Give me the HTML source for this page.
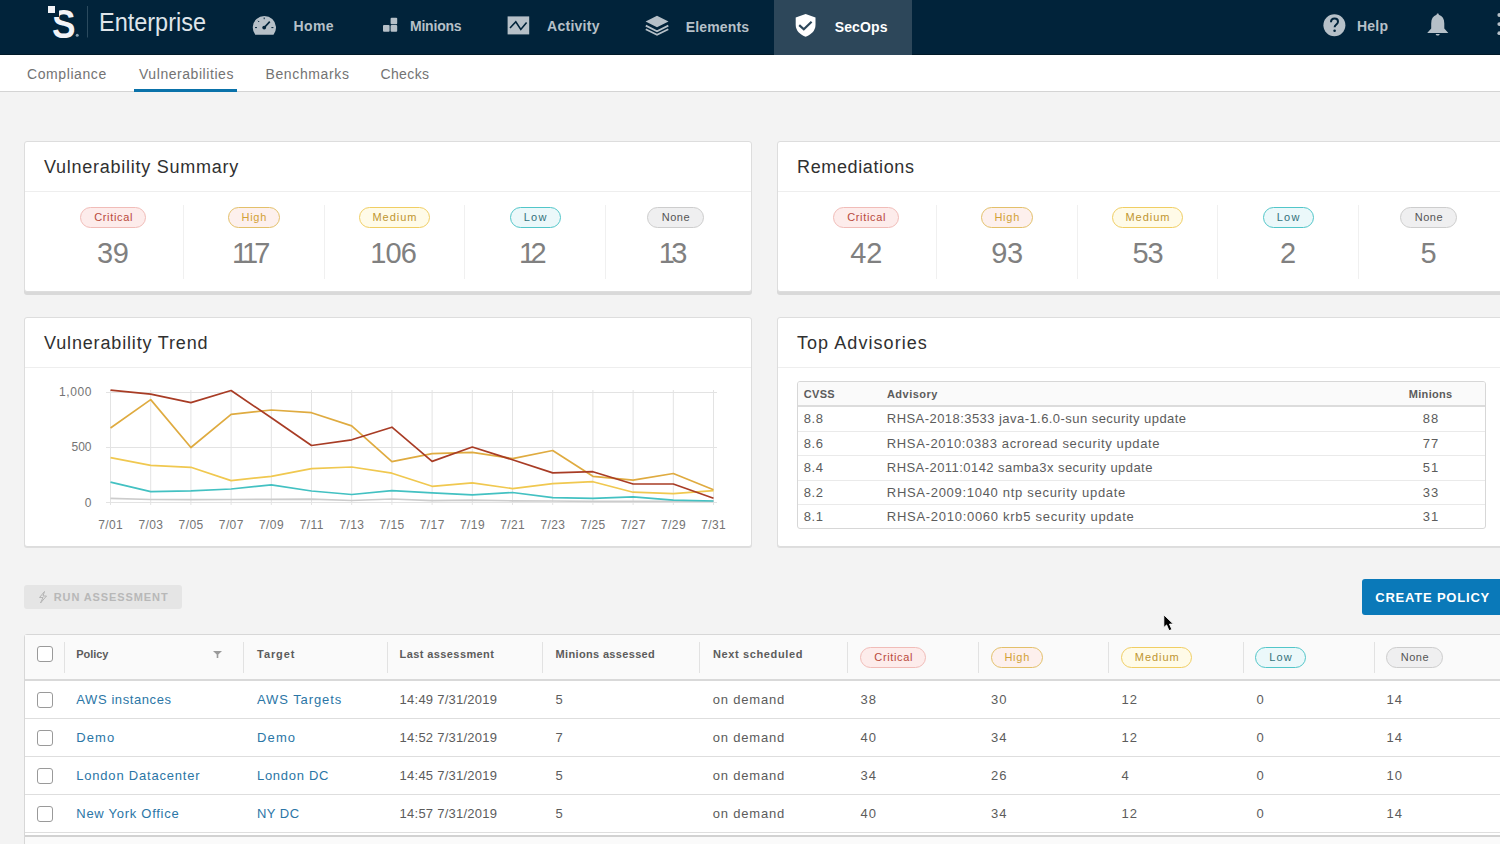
<!DOCTYPE html>
<html><head><meta charset="utf-8"><style>
*{box-sizing:border-box;margin:0;padding:0}
html,body{width:1500px;height:844px;overflow:hidden}
body{background:#f3f3f3;font-family:"Liberation Sans",sans-serif;position:relative}
.a{position:absolute}
.t{white-space:nowrap}
</style></head><body>
<div class="a" style="left:0px;top:0px;width:1500px;height:55px;background:#01233a;"></div>
<div class="a" style="left:0px;top:54px;width:1500px;height:1px;background:#001a29;"></div>
<div class="a" style="left:774px;top:0px;width:138px;height:55px;background:#2d475a;"></div>
<svg class="a" style="left:0;top:0" width="1500" height="55" viewBox="0 0 1500 55">
<circle cx="77.2" cy="35.2" r="1.5" fill="#8aa0b0"/>
<rect x="87" y="6" width="1" height="31.5" fill="#2b4a5e"/>
</svg>
<div class="a" style="left:51.6px;top:3.6px;font-weight:700;font-size:40px;line-height:40px;color:#f2f3f7;transform:scaleX(0.88);transform-origin:left top">S</div>
<div class="a" style="left:49px;top:7px;width:9.5px;height:9.8px;background:#01233a"></div>
<div class="a" style="left:48.3px;top:6px;width:7.1px;height:7.3px;background:#f2f3f7"></div>
<div class="a t" style="left:99.4px;top:9.30px;font-size:26px;line-height:26px;color:#dfe5ea;font-weight:400;letter-spacing:0.000px;transform:scaleX(0.9030);transform-origin:left center;"><span id="t0">Enterprise</span></div>
<div class="a t" style="left:293.6px;top:19.10px;font-size:14px;line-height:14px;color:#b6c0c8;font-weight:700;letter-spacing:0.365px;"><span id="t1">Home</span></div>
<div class="a t" style="left:410px;top:19.20px;font-size:14px;line-height:14px;color:#b6c0c8;font-weight:700;letter-spacing:-0.215px;"><span id="t2">Minions</span></div>
<div class="a t" style="left:547px;top:19.30px;font-size:14px;line-height:14px;color:#b6c0c8;font-weight:700;letter-spacing:0.275px;"><span id="t3">Activity</span></div>
<div class="a t" style="left:685.8px;top:19.50px;font-size:14px;line-height:14px;color:#b6c0c8;font-weight:700;letter-spacing:0.136px;"><span id="t4">Elements</span></div>
<div class="a t" style="left:834.7px;top:19.50px;font-size:14px;line-height:14px;color:#ffffff;font-weight:700;letter-spacing:0.132px;"><span id="t5">SecOps</span></div>
<div class="a t" style="left:1357px;top:19.40px;font-size:14px;line-height:14px;color:#b6c0c8;font-weight:700;letter-spacing:0.219px;"><span id="t6">Help</span></div>
<svg class="a" style="left:0;top:0" width="1500" height="55" viewBox="0 0 1500 55">
<!-- gauge -->
<path d="M255.3,34.8 A11.6,11.6 0 1 1 273.5,34.8 Z" fill="#b6c0c8"/>
<line x1="264.2" y1="27.6" x2="269.8" y2="21.6" stroke="#01233a" stroke-width="1.6"/>
<circle cx="264.2" cy="27.6" r="1.9" fill="#01233a"/>
<line x1="255" y1="27.6" x2="257" y2="27.6" stroke="#01233a" stroke-width="1"/>
<line x1="258" y1="20.8" x2="259.2" y2="22" stroke="#01233a" stroke-width="1"/>
<line x1="264.2" y1="17.5" x2="264.2" y2="19.2" stroke="#01233a" stroke-width="1"/>
<line x1="271.4" y1="27.6" x2="273.4" y2="27.6" stroke="#01233a" stroke-width="1"/>
<!-- minions -->
<rect x="383" y="25" width="6.6" height="6.8" rx="1" fill="#b6c0c8"/>
<rect x="390.6" y="25" width="6.6" height="6.8" rx="1" fill="#b6c0c8"/>
<rect x="390.6" y="17.8" width="6.6" height="6.4" rx="1" fill="#b6c0c8"/>
<!-- activity -->
<rect x="507.6" y="16.4" width="21.6" height="18" fill="#b6c0c8"/>
<polyline points="510,28 515.8,21.8 520.8,29.4 526.6,22.4" fill="none" stroke="#01233a" stroke-width="1.6"/>
<!-- elements -->
<polygon points="657,15.8 668.5,21.5 657,27.2 645.6,21.5" fill="#b6c0c8"/>
<polyline points="645.8,25.6 657,31.2 668.3,25.6" fill="none" stroke="#b6c0c8" stroke-width="1.8"/>
<polyline points="645.8,29.2 657,34.8 668.3,29.2" fill="none" stroke="#b6c0c8" stroke-width="1.8"/>
<!-- shield -->
<path d="M805.6,13.9 L815.5,17.5 L815.5,25 C815.5,31 810.5,35 805.6,36.8 C800.7,35 795.7,31 795.7,25 L795.7,17.5 Z" fill="#ffffff"/>
<polyline points="799.2,25.1 803.8,29.3 811.6,21.8" fill="none" stroke="#2d475a" stroke-width="2.2"/>
<!-- help -->
<circle cx="1334.4" cy="25.3" r="11" fill="#b6c0c8"/>
<path d="M1331,22.2 C1331,19.6 1333,18.6 1334.6,18.6 C1336.6,18.6 1338,20 1338,21.8 C1338,24.5 1334.6,24.5 1334.6,27.3" fill="none" stroke="#01233a" stroke-width="2"/>
<circle cx="1334.6" cy="30.8" r="1.3" fill="#01233a"/>
<!-- bell -->
<path d="M1437.7,13.5 C1438.5,13.5 1438.8,14 1438.8,14.8 C1442.5,16 1444.3,19 1444.3,23.5 L1444.3,28.5 L1448.3,33 L1427.2,33 L1431.2,28.5 L1431.2,23.5 C1431.2,19 1433,16 1436.6,14.8 C1436.6,14 1437,13.5 1437.7,13.5 Z" fill="#b6c0c8"/>
<path d="M1435.7,34 L1439.7,34 C1439.5,35.2 1438.7,35.6 1437.7,35.6 C1436.7,35.6 1435.9,35.2 1435.7,34 Z" fill="#b6c0c8"/>
<!-- dots -->
<circle cx="1499.3" cy="15" r="1.9" fill="#b6c0c8"/>
<circle cx="1499.3" cy="24.1" r="1.9" fill="#b6c0c8"/>
<circle cx="1499.3" cy="33.2" r="1.9" fill="#b6c0c8"/>
</svg>
<div class="a" style="left:0px;top:55px;width:1500px;height:36px;background:#ffffff;"></div>
<div class="a" style="left:0px;top:91px;width:1500px;height:1px;background:#d4d4d4;"></div>
<div class="a t" style="left:27px;top:66.70px;font-size:14px;line-height:14px;color:#737373;font-weight:400;letter-spacing:0.585px;"><span id="t7">Compliance</span></div>
<div class="a t" style="left:139px;top:66.70px;font-size:14px;line-height:14px;color:#737373;font-weight:400;letter-spacing:0.554px;"><span id="t8">Vulnerabilities</span></div>
<div class="a t" style="left:265.5px;top:66.70px;font-size:14px;line-height:14px;color:#737373;font-weight:400;letter-spacing:0.621px;"><span id="t9">Benchmarks</span></div>
<div class="a t" style="left:380.5px;top:66.70px;font-size:14px;line-height:14px;color:#737373;font-weight:400;letter-spacing:0.362px;"><span id="t10">Checks</span></div>
<div class="a" style="left:134px;top:88.5px;width:103px;height:3px;background:#0a72aa;"></div>
<div class="a" style="left:24px;top:141px;width:728px;height:151px;background:#fff;border:1px solid #dddddd;border-radius:3px;box-shadow:0 3px 0 #d9d9d9;"></div>
<div class="a" style="left:25px;top:191px;width:726px;height:1px;background:#eeeeee;"></div>
<div class="a t" style="left:44px;top:157.70px;font-size:18px;line-height:18px;color:#303030;font-weight:400;letter-spacing:0.745px;"><span id="t11">Vulnerability Summary</span></div>
<div class="a" style="left:777px;top:141px;width:800px;height:151px;background:#fff;border:1px solid #dddddd;border-radius:3px;box-shadow:0 3px 0 #d9d9d9;"></div>
<div class="a" style="left:778px;top:191px;width:798px;height:1px;background:#eeeeee;"></div>
<div class="a t" style="left:797px;top:157.70px;font-size:18px;line-height:18px;color:#303030;font-weight:400;letter-spacing:0.631px;"><span id="t12">Remediations</span></div>
<div class="a" style="left:80.3px;top:207px;width:66px;height:21px;border:1px solid #f1bcb8;background:#fdeceb;border-radius:11px"></div>
<div class="a t" style="left:-186.7px;width:600px;text-align:center;padding-left:0.654px;top:211.95px;font-size:11px;line-height:11px;color:#b94a3d;font-weight:400;letter-spacing:0.654px;"><span id="t13">Critical</span></div>
<div class="a t" style="left:-187.2px;width:600px;text-align:center;padding-left:-0.266px;top:238.95px;font-size:29px;line-height:29px;color:#808080;font-weight:400;letter-spacing:-0.266px;"><span id="t14">39</span></div>
<div class="a" style="left:227.6px;top:207px;width:52.5px;height:21px;border:1px solid #e3c06a;background:#fdf0ed;border-radius:11px"></div>
<div class="a t" style="left:-46.10000000000002px;width:600px;text-align:center;padding-left:0.792px;top:211.95px;font-size:11px;line-height:11px;color:#d2a136;font-weight:400;letter-spacing:0.792px;"><span id="t15">High</span></div>
<div class="a t" style="left:-50.80000000000001px;width:600px;text-align:center;padding-left:-3.917px;top:238.95px;font-size:29px;line-height:29px;color:#808080;font-weight:400;letter-spacing:-3.917px;"><span id="t16">117</span></div>
<div class="a" style="left:183.1px;top:205px;width:1px;height:74px;background:#f0f0f0;"></div>
<div class="a" style="left:359.0px;top:207px;width:71px;height:21px;border:1px solid #f0ce63;background:#fffbe8;border-radius:11px"></div>
<div class="a t" style="left:94.5px;width:600px;text-align:center;padding-left:0.975px;top:211.95px;font-size:11px;line-height:11px;color:#c09630;font-weight:400;letter-spacing:0.975px;"><span id="t17">Medium</span></div>
<div class="a t" style="left:93.10000000000002px;width:600px;text-align:center;padding-left:-0.945px;top:238.95px;font-size:29px;line-height:29px;color:#808080;font-weight:400;letter-spacing:-0.945px;"><span id="t18">106</span></div>
<div class="a" style="left:323.7px;top:205px;width:1px;height:74px;background:#f0f0f0;"></div>
<div class="a" style="left:509.6px;top:207px;width:51px;height:21px;border:1px solid #52c6c9;background:#ebf8fa;border-radius:11px"></div>
<div class="a t" style="left:235.0999999999999px;width:600px;text-align:center;padding-left:1.156px;top:211.95px;font-size:11px;line-height:11px;color:#33727a;font-weight:400;letter-spacing:1.156px;"><span id="t19">Low</span></div>
<div class="a t" style="left:230.5999999999999px;width:600px;text-align:center;padding-left:-4.466px;top:238.95px;font-size:29px;line-height:29px;color:#808080;font-weight:400;letter-spacing:-4.466px;"><span id="t20">12</span></div>
<div class="a" style="left:464.29999999999995px;top:205px;width:1px;height:74px;background:#f0f0f0;"></div>
<div class="a" style="left:647.2px;top:207px;width:57px;height:21px;border:1px solid #cdcdcd;background:#efeff0;border-radius:11px"></div>
<div class="a t" style="left:375.69999999999993px;width:600px;text-align:center;padding-left:0.568px;top:211.95px;font-size:11px;line-height:11px;color:#555555;font-weight:400;letter-spacing:0.568px;"><span id="t21">None</span></div>
<div class="a t" style="left:371.19999999999993px;width:600px;text-align:center;padding-left:-3.666px;top:238.95px;font-size:29px;line-height:29px;color:#808080;font-weight:400;letter-spacing:-3.666px;"><span id="t22">13</span></div>
<div class="a" style="left:604.9px;top:205px;width:1px;height:74px;background:#f0f0f0;"></div>
<div class="a" style="left:833.3px;top:207px;width:66px;height:21px;border:1px solid #f1bcb8;background:#fdeceb;border-radius:11px"></div>
<div class="a t" style="left:566.3px;width:600px;text-align:center;padding-left:0.654px;top:211.95px;font-size:11px;line-height:11px;color:#b94a3d;font-weight:400;letter-spacing:0.654px;"><span id="t23">Critical</span></div>
<div class="a t" style="left:566.3px;width:600px;text-align:center;padding-left:-0.066px;top:238.95px;font-size:29px;line-height:29px;color:#808080;font-weight:400;letter-spacing:-0.066px;"><span id="t24">42</span></div>
<div class="a" style="left:980.6px;top:207px;width:52.5px;height:21px;border:1px solid #e3c06a;background:#fdf0ed;border-radius:11px"></div>
<div class="a t" style="left:706.9px;width:600px;text-align:center;padding-left:0.792px;top:211.95px;font-size:11px;line-height:11px;color:#d2a136;font-weight:400;letter-spacing:0.792px;"><span id="t25">High</span></div>
<div class="a t" style="left:706.9px;width:600px;text-align:center;padding-left:-0.466px;top:238.95px;font-size:29px;line-height:29px;color:#808080;font-weight:400;letter-spacing:-0.466px;"><span id="t26">93</span></div>
<div class="a" style="left:936.1px;top:205px;width:1px;height:74px;background:#f0f0f0;"></div>
<div class="a" style="left:1112.0px;top:207px;width:71px;height:21px;border:1px solid #f0ce63;background:#fffbe8;border-radius:11px"></div>
<div class="a t" style="left:847.5px;width:600px;text-align:center;padding-left:0.975px;top:211.95px;font-size:11px;line-height:11px;color:#c09630;font-weight:400;letter-spacing:0.975px;"><span id="t27">Medium</span></div>
<div class="a t" style="left:847.5px;width:600px;text-align:center;padding-left:-1.066px;top:238.95px;font-size:29px;line-height:29px;color:#808080;font-weight:400;letter-spacing:-1.066px;"><span id="t28">53</span></div>
<div class="a" style="left:1076.7px;top:205px;width:1px;height:74px;background:#f0f0f0;"></div>
<div class="a" style="left:1262.6px;top:207px;width:51px;height:21px;border:1px solid #52c6c9;background:#ebf8fa;border-radius:11px"></div>
<div class="a t" style="left:988.0999999999999px;width:600px;text-align:center;padding-left:1.156px;top:211.95px;font-size:11px;line-height:11px;color:#33727a;font-weight:400;letter-spacing:1.156px;"><span id="t29">Low</span></div>
<div class="a t" style="left:988.0999999999999px;width:600px;text-align:center;padding-left:0.000px;top:238.95px;font-size:29px;line-height:29px;color:#808080;font-weight:400;letter-spacing:0.000px;"><span id="t30">2</span></div>
<div class="a" style="left:1217.3px;top:205px;width:1px;height:74px;background:#f0f0f0;"></div>
<div class="a" style="left:1400.2px;top:207px;width:57px;height:21px;border:1px solid #cdcdcd;background:#efeff0;border-radius:11px"></div>
<div class="a t" style="left:1128.6999999999998px;width:600px;text-align:center;padding-left:0.568px;top:211.95px;font-size:11px;line-height:11px;color:#555555;font-weight:400;letter-spacing:0.568px;"><span id="t31">None</span></div>
<div class="a t" style="left:1128.6999999999998px;width:600px;text-align:center;padding-left:0.000px;top:238.95px;font-size:29px;line-height:29px;color:#808080;font-weight:400;letter-spacing:0.000px;"><span id="t32">5</span></div>
<div class="a" style="left:1357.9px;top:205px;width:1px;height:74px;background:#f0f0f0;"></div>
<div class="a" style="left:24px;top:317px;width:728px;height:230px;background:#fff;border:1px solid #dddddd;border-radius:3px;box-shadow:0 1px 0 #dedede;"></div>
<div class="a" style="left:25px;top:367px;width:726px;height:1px;background:#eeeeee;"></div>
<div class="a t" style="left:44px;top:333.70px;font-size:18px;line-height:18px;color:#303030;font-weight:400;letter-spacing:0.843px;"><span id="t33">Vulnerability Trend</span></div>
<div class="a" style="left:777px;top:317px;width:800px;height:230px;background:#fff;border:1px solid #dddddd;border-radius:3px;box-shadow:0 1px 0 #dedede;"></div>
<div class="a" style="left:778px;top:367px;width:798px;height:1px;background:#eeeeee;"></div>
<div class="a t" style="left:797px;top:333.70px;font-size:18px;line-height:18px;color:#303030;font-weight:400;letter-spacing:1.057px;"><span id="t34">Top Advisories</span></div>
<svg class="a" style="left:0;top:0" width="760" height="560" viewBox="0 0 760 560"><line x1="106" y1="392.5" x2="717" y2="392.5" stroke="#e3e3e3" stroke-width="1"/><line x1="106" y1="447.5" x2="717" y2="447.5" stroke="#e3e3e3" stroke-width="1"/><line x1="106" y1="502.5" x2="717" y2="502.5" stroke="#e3e3e3" stroke-width="1"/><line x1="110.5" y1="390" x2="110.5" y2="505" stroke="#e3e3e3" stroke-width="1"/><line x1="150.7" y1="390" x2="150.7" y2="505" stroke="#e3e3e3" stroke-width="1"/><line x1="190.9" y1="390" x2="190.9" y2="505" stroke="#e3e3e3" stroke-width="1"/><line x1="231.1" y1="390" x2="231.1" y2="505" stroke="#e3e3e3" stroke-width="1"/><line x1="271.3" y1="390" x2="271.3" y2="505" stroke="#e3e3e3" stroke-width="1"/><line x1="311.5" y1="390" x2="311.5" y2="505" stroke="#e3e3e3" stroke-width="1"/><line x1="351.7" y1="390" x2="351.7" y2="505" stroke="#e3e3e3" stroke-width="1"/><line x1="391.9" y1="390" x2="391.9" y2="505" stroke="#e3e3e3" stroke-width="1"/><line x1="432.1" y1="390" x2="432.1" y2="505" stroke="#e3e3e3" stroke-width="1"/><line x1="472.3" y1="390" x2="472.3" y2="505" stroke="#e3e3e3" stroke-width="1"/><line x1="512.5" y1="390" x2="512.5" y2="505" stroke="#e3e3e3" stroke-width="1"/><line x1="552.7" y1="390" x2="552.7" y2="505" stroke="#e3e3e3" stroke-width="1"/><line x1="592.9" y1="390" x2="592.9" y2="505" stroke="#e3e3e3" stroke-width="1"/><line x1="633.1" y1="390" x2="633.1" y2="505" stroke="#e3e3e3" stroke-width="1"/><line x1="673.3" y1="390" x2="673.3" y2="505" stroke="#e3e3e3" stroke-width="1"/><line x1="713.5" y1="390" x2="713.5" y2="505" stroke="#e3e3e3" stroke-width="1"/><polyline points="110.5,498.3 150.7,499.5 190.9,499.6 231.1,499.5 271.3,499.4 311.5,499.2 351.7,500.5 391.9,499.0 432.1,500.6 472.3,500.2 512.5,500.8 552.7,501.0 592.9,501.4 633.1,501.4 673.3,501.4 713.5,501.4" fill="none" stroke="#cccccc" stroke-width="1.7" stroke-linejoin="round"/><polyline points="110.5,482.2 150.7,491.7 190.9,490.8 231.1,489.0 271.3,484.8 311.5,491.0 351.7,494.5 391.9,490.6 432.1,492.8 472.3,494.8 512.5,492.5 552.7,497.6 592.9,498.3 633.1,496.8 673.3,500.2 713.5,501.0" fill="none" stroke="#43c1c2" stroke-width="1.7" stroke-linejoin="round"/><polyline points="110.5,457.6 150.7,465.3 190.9,467.3 231.1,480.6 271.3,476.3 311.5,468.6 351.7,467.0 391.9,473.2 432.1,486.3 472.3,482.9 512.5,488.6 552.7,483.7 592.9,481.7 633.1,492.2 673.3,493.7 713.5,490.6" fill="none" stroke="#f0c850" stroke-width="1.7" stroke-linejoin="round"/><polyline points="110.5,428.0 150.7,399.6 190.9,447.5 231.1,414.3 271.3,410.0 311.5,412.7 351.7,425.9 391.9,461.7 432.1,453.7 472.3,452.4 512.5,458.6 552.7,450.5 592.9,476.3 633.1,480.2 673.3,473.5 713.5,489.7" fill="none" stroke="#dfab40" stroke-width="1.7" stroke-linejoin="round"/><polyline points="110.5,390.1 150.7,394.2 190.9,402.6 231.1,390.5 271.3,417.8 311.5,445.5 351.7,439.8 391.9,427.2 432.1,461.4 472.3,447.0 512.5,459.8 552.7,472.9 592.9,471.7 633.1,484.0 673.3,484.0 713.5,498.3" fill="none" stroke="#a83c25" stroke-width="1.7" stroke-linejoin="round"/></svg>
<div class="a t" style="right:1408.5px;text-align:right;margin-right:-0.592px;top:386.30px;font-size:12px;line-height:12px;color:#747474;font-weight:400;letter-spacing:0.592px;"><span id="t35">1,000</span></div>
<div class="a t" style="right:1408.5px;text-align:right;margin-right:0.000px;top:441.30px;font-size:12px;line-height:12px;color:#747474;font-weight:400;letter-spacing:0.000px;"><span id="t36">500</span></div>
<div class="a t" style="right:1408.5px;text-align:right;margin-right:0.000px;top:496.80px;font-size:12px;line-height:12px;color:#747474;font-weight:400;letter-spacing:0.000px;"><span id="t37">0</span></div>
<div class="a t" style="left:-189.5px;width:600px;text-align:center;padding-left:0.400px;top:518.60px;font-size:12px;line-height:12px;color:#747474;font-weight:400;letter-spacing:0.400px;"><span id="t38">7/01</span></div>
<div class="a t" style="left:-149.3px;width:600px;text-align:center;padding-left:0.400px;top:518.60px;font-size:12px;line-height:12px;color:#747474;font-weight:400;letter-spacing:0.400px;"><span id="t39">7/03</span></div>
<div class="a t" style="left:-109.1px;width:600px;text-align:center;padding-left:0.400px;top:518.60px;font-size:12px;line-height:12px;color:#747474;font-weight:400;letter-spacing:0.400px;"><span id="t40">7/05</span></div>
<div class="a t" style="left:-68.89999999999998px;width:600px;text-align:center;padding-left:0.400px;top:518.60px;font-size:12px;line-height:12px;color:#747474;font-weight:400;letter-spacing:0.400px;"><span id="t41">7/07</span></div>
<div class="a t" style="left:-28.69999999999999px;width:600px;text-align:center;padding-left:0.400px;top:518.60px;font-size:12px;line-height:12px;color:#747474;font-weight:400;letter-spacing:0.400px;"><span id="t42">7/09</span></div>
<div class="a t" style="left:11.5px;width:600px;text-align:center;padding-left:0.400px;top:518.60px;font-size:12px;line-height:12px;color:#747474;font-weight:400;letter-spacing:0.400px;"><span id="t43">7/11</span></div>
<div class="a t" style="left:51.700000000000045px;width:600px;text-align:center;padding-left:0.400px;top:518.60px;font-size:12px;line-height:12px;color:#747474;font-weight:400;letter-spacing:0.400px;"><span id="t44">7/13</span></div>
<div class="a t" style="left:91.90000000000003px;width:600px;text-align:center;padding-left:0.400px;top:518.60px;font-size:12px;line-height:12px;color:#747474;font-weight:400;letter-spacing:0.400px;"><span id="t45">7/15</span></div>
<div class="a t" style="left:132.10000000000002px;width:600px;text-align:center;padding-left:0.400px;top:518.60px;font-size:12px;line-height:12px;color:#747474;font-weight:400;letter-spacing:0.400px;"><span id="t46">7/17</span></div>
<div class="a t" style="left:172.3px;width:600px;text-align:center;padding-left:0.400px;top:518.60px;font-size:12px;line-height:12px;color:#747474;font-weight:400;letter-spacing:0.400px;"><span id="t47">7/19</span></div>
<div class="a t" style="left:212.5px;width:600px;text-align:center;padding-left:0.400px;top:518.60px;font-size:12px;line-height:12px;color:#747474;font-weight:400;letter-spacing:0.400px;"><span id="t48">7/21</span></div>
<div class="a t" style="left:252.70000000000005px;width:600px;text-align:center;padding-left:0.400px;top:518.60px;font-size:12px;line-height:12px;color:#747474;font-weight:400;letter-spacing:0.400px;"><span id="t49">7/23</span></div>
<div class="a t" style="left:292.9000000000001px;width:600px;text-align:center;padding-left:0.400px;top:518.60px;font-size:12px;line-height:12px;color:#747474;font-weight:400;letter-spacing:0.400px;"><span id="t50">7/25</span></div>
<div class="a t" style="left:333.1px;width:600px;text-align:center;padding-left:0.400px;top:518.60px;font-size:12px;line-height:12px;color:#747474;font-weight:400;letter-spacing:0.400px;"><span id="t51">7/27</span></div>
<div class="a t" style="left:373.30000000000007px;width:600px;text-align:center;padding-left:0.400px;top:518.60px;font-size:12px;line-height:12px;color:#747474;font-weight:400;letter-spacing:0.400px;"><span id="t52">7/29</span></div>
<div class="a t" style="left:413.5px;width:600px;text-align:center;padding-left:0.400px;top:518.60px;font-size:12px;line-height:12px;color:#747474;font-weight:400;letter-spacing:0.400px;"><span id="t53">7/31</span></div>
<div class="a" style="left:797px;top:381px;width:689px;height:148px;border:1px solid #d7d7d7;border-radius:3px;background:#fff;overflow:hidden"><div style="position:absolute;left:0;top:0;width:100%;height:25px;background:#fafafa;border-bottom:2px solid #dcdcdc"></div></div>
<div class="a t" style="left:803.7px;top:388.95px;font-size:11px;line-height:11px;color:#5c5c5c;font-weight:700;letter-spacing:0.344px;"><span id="t54">CVSS</span></div>
<div class="a t" style="left:886.9px;top:388.95px;font-size:11px;line-height:11px;color:#5c5c5c;font-weight:700;letter-spacing:0.503px;"><span id="t55">Advisory</span></div>
<div class="a t" style="left:1130.5px;width:600px;text-align:center;padding-left:0.323px;top:388.95px;font-size:11px;line-height:11px;color:#5c5c5c;font-weight:700;letter-spacing:0.323px;"><span id="t56">Minions</span></div>
<div class="a t" style="left:803.7px;top:412.05px;font-size:13px;line-height:13px;color:#5c5c5c;font-weight:400;letter-spacing:0.600px;"><span id="t57">8.8</span></div>
<div class="a t" style="left:886.8px;top:412.05px;font-size:13px;line-height:13px;color:#5c5c5c;font-weight:400;letter-spacing:0.446px;"><span id="t58">RHSA-2018:3533 java-1.6.0-sun security update</span></div>
<div class="a t" style="left:1130.5px;width:600px;text-align:center;padding-left:1.000px;top:412.05px;font-size:13px;line-height:13px;color:#5c5c5c;font-weight:400;letter-spacing:1.000px;"><span id="t59">88</span></div>
<div class="a" style="left:798px;top:430.6px;width:687px;height:1px;background:#eaeaea;"></div>
<div class="a t" style="left:803.7px;top:436.60px;font-size:13px;line-height:13px;color:#5c5c5c;font-weight:400;letter-spacing:0.600px;"><span id="t60">8.6</span></div>
<div class="a t" style="left:886.8px;top:436.60px;font-size:13px;line-height:13px;color:#5c5c5c;font-weight:400;letter-spacing:0.634px;"><span id="t61">RHSA-2010:0383 acroread security update</span></div>
<div class="a t" style="left:1130.5px;width:600px;text-align:center;padding-left:1.000px;top:436.60px;font-size:13px;line-height:13px;color:#5c5c5c;font-weight:400;letter-spacing:1.000px;"><span id="t62">77</span></div>
<div class="a" style="left:798px;top:455.2px;width:687px;height:1px;background:#eaeaea;"></div>
<div class="a t" style="left:803.7px;top:461.15px;font-size:13px;line-height:13px;color:#5c5c5c;font-weight:400;letter-spacing:0.600px;"><span id="t63">8.4</span></div>
<div class="a t" style="left:886.8px;top:461.15px;font-size:13px;line-height:13px;color:#5c5c5c;font-weight:400;letter-spacing:0.447px;"><span id="t64">RHSA-2011:0142 samba3x security update</span></div>
<div class="a t" style="left:1130.5px;width:600px;text-align:center;padding-left:1.000px;top:461.15px;font-size:13px;line-height:13px;color:#5c5c5c;font-weight:400;letter-spacing:1.000px;"><span id="t65">51</span></div>
<div class="a" style="left:798px;top:479.8px;width:687px;height:1px;background:#eaeaea;"></div>
<div class="a t" style="left:803.7px;top:485.70px;font-size:13px;line-height:13px;color:#5c5c5c;font-weight:400;letter-spacing:0.600px;"><span id="t66">8.2</span></div>
<div class="a t" style="left:886.8px;top:485.70px;font-size:13px;line-height:13px;color:#5c5c5c;font-weight:400;letter-spacing:0.701px;"><span id="t67">RHSA-2009:1040 ntp security update</span></div>
<div class="a t" style="left:1130.5px;width:600px;text-align:center;padding-left:1.000px;top:485.70px;font-size:13px;line-height:13px;color:#5c5c5c;font-weight:400;letter-spacing:1.000px;"><span id="t68">33</span></div>
<div class="a" style="left:798px;top:504.4px;width:687px;height:1px;background:#eaeaea;"></div>
<div class="a t" style="left:803.7px;top:510.25px;font-size:13px;line-height:13px;color:#5c5c5c;font-weight:400;letter-spacing:0.600px;"><span id="t69">8.1</span></div>
<div class="a t" style="left:886.8px;top:510.25px;font-size:13px;line-height:13px;color:#5c5c5c;font-weight:400;letter-spacing:0.718px;"><span id="t70">RHSA-2010:0060 krb5 security update</span></div>
<div class="a t" style="left:1130.5px;width:600px;text-align:center;padding-left:1.000px;top:510.25px;font-size:13px;line-height:13px;color:#5c5c5c;font-weight:400;letter-spacing:1.000px;"><span id="t71">31</span></div>
<div class="a" style="left:24px;top:585px;width:158px;height:24px;background:#e5e5e5;border-radius:3px"></div>
<svg class="a" style="left:36px;top:590px" width="14" height="15" viewBox="0 0 14 15"><path d="M8.5,1.5 L3.5,7.5 L7,7.5 L4.5,13 L10.5,6 L7,6 Z" fill="none" stroke="#b5b5b5" stroke-width="1"/></svg>
<div class="a t" style="left:53.7px;top:591.85px;font-size:11px;line-height:11px;color:#b8b8b8;font-weight:700;letter-spacing:0.901px;"><span id="t72">RUN ASSESSMENT</span></div>
<div class="a" style="left:1362px;top:579px;width:180px;height:36px;background:#0a79b9;border-radius:3px"></div>
<div class="a t" style="left:1375.2px;top:591.45px;font-size:13px;line-height:13px;color:#ffffff;font-weight:700;letter-spacing:0.800px;"><span id="t73">CREATE POLICY</span></div>
<svg class="a" style="left:1162px;top:613px" width="14" height="20" viewBox="0 0 14 20"><path d="M1.8,1.8 L1.8,14.6 L4.6,11.9 L7,17.6 L9.9,16.6 L7.5,11.1 L11.4,11.1 Z" fill="#000" stroke="#fff" stroke-width="0.9"/></svg>
<div class="a" style="left:24px;top:634px;width:1500px;height:230px;background:#fff;border:1px solid #d7d7d7;border-radius:3px"></div>
<div class="a" style="left:25px;top:635px;width:1475px;height:44px;background:#fafafa;"></div>
<div class="a" style="left:25px;top:679px;width:1475px;height:2px;background:#d9d9d9;"></div>
<div class="a" style="left:64px;top:642px;width:1px;height:31px;background:#e2e2e2;"></div>
<div class="a" style="left:243px;top:642px;width:1px;height:31px;background:#e2e2e2;"></div>
<div class="a" style="left:387px;top:642px;width:1px;height:31px;background:#e2e2e2;"></div>
<div class="a" style="left:542px;top:642px;width:1px;height:31px;background:#e2e2e2;"></div>
<div class="a" style="left:699px;top:642px;width:1px;height:31px;background:#e2e2e2;"></div>
<div class="a" style="left:847px;top:642px;width:1px;height:31px;background:#e2e2e2;"></div>
<div class="a" style="left:978px;top:642px;width:1px;height:31px;background:#e2e2e2;"></div>
<div class="a" style="left:1108px;top:642px;width:1px;height:31px;background:#e2e2e2;"></div>
<div class="a" style="left:1243px;top:642px;width:1px;height:31px;background:#e2e2e2;"></div>
<div class="a" style="left:1374px;top:642px;width:1px;height:31px;background:#e2e2e2;"></div>
<div class="a" style="left:37px;top:645.5px;width:16px;height:16px;border:1px solid #9a9a9a;border-radius:3px;background:#fff"></div>
<div class="a t" style="left:76.3px;top:648.95px;font-size:11px;line-height:11px;color:#5c5c5c;font-weight:700;letter-spacing:-0.081px;"><span id="t74">Policy</span></div>
<svg class="a" style="left:212px;top:650px" width="11" height="9" viewBox="0 0 11 9"><path d="M1,1 L10,1 L6.3,4.5 L6.3,8 L4.7,8 L4.7,4.5 Z" fill="#9a9a9a"/></svg>
<div class="a t" style="left:257.1px;top:648.95px;font-size:11px;line-height:11px;color:#5c5c5c;font-weight:700;letter-spacing:0.897px;"><span id="t75">Target</span></div>
<div class="a t" style="left:399.6px;top:648.95px;font-size:11px;line-height:11px;color:#5c5c5c;font-weight:700;letter-spacing:0.402px;"><span id="t76">Last assessment</span></div>
<div class="a t" style="left:555.6px;top:648.95px;font-size:11px;line-height:11px;color:#5c5c5c;font-weight:700;letter-spacing:0.336px;"><span id="t77">Minions assessed</span></div>
<div class="a t" style="left:713px;top:648.95px;font-size:11px;line-height:11px;color:#5c5c5c;font-weight:700;letter-spacing:0.622px;"><span id="t78">Next scheduled</span></div>
<div class="a" style="left:860.4px;top:647px;width:66px;height:21px;border:1px solid #f1bcb8;background:#fdeceb;border-radius:11px"></div>
<div class="a t" style="left:593.4px;width:600px;text-align:center;padding-left:0.654px;top:651.95px;font-size:11px;line-height:11px;color:#b94a3d;font-weight:400;letter-spacing:0.654px;"><span id="t79">Critical</span></div>
<div class="a" style="left:990.6px;top:647px;width:52.5px;height:21px;border:1px solid #e3c06a;background:#fdf0ed;border-radius:11px"></div>
<div class="a t" style="left:716.9px;width:600px;text-align:center;padding-left:0.792px;top:651.95px;font-size:11px;line-height:11px;color:#d2a136;font-weight:400;letter-spacing:0.792px;"><span id="t80">High</span></div>
<div class="a" style="left:1121.3px;top:647px;width:71px;height:21px;border:1px solid #f0ce63;background:#fffbe8;border-radius:11px"></div>
<div class="a t" style="left:856.8px;width:600px;text-align:center;padding-left:0.975px;top:651.95px;font-size:11px;line-height:11px;color:#c09630;font-weight:400;letter-spacing:0.975px;"><span id="t81">Medium</span></div>
<div class="a" style="left:1255.0px;top:647px;width:51px;height:21px;border:1px solid #52c6c9;background:#ebf8fa;border-radius:11px"></div>
<div class="a t" style="left:980.5px;width:600px;text-align:center;padding-left:1.156px;top:651.95px;font-size:11px;line-height:11px;color:#33727a;font-weight:400;letter-spacing:1.156px;"><span id="t82">Low</span></div>
<div class="a" style="left:1386.2px;top:647px;width:57px;height:21px;border:1px solid #cdcdcd;background:#efeff0;border-radius:11px"></div>
<div class="a t" style="left:1114.7px;width:600px;text-align:center;padding-left:0.568px;top:651.95px;font-size:11px;line-height:11px;color:#555555;font-weight:400;letter-spacing:0.568px;"><span id="t83">None</span></div>
<div class="a" style="left:25px;top:718px;width:1475px;height:1px;background:#dedede;"></div>
<div class="a" style="left:37px;top:692px;width:16px;height:16px;border:1px solid #9a9a9a;border-radius:3px;background:#fff"></div>
<div class="a t" style="left:76.3px;top:692.65px;font-size:13px;line-height:13px;color:#2b76a6;font-weight:400;letter-spacing:0.586px;"><span id="t84">AWS instances</span></div>
<div class="a t" style="left:257px;top:692.65px;font-size:13px;line-height:13px;color:#2b76a6;font-weight:400;letter-spacing:0.916px;"><span id="t85">AWS Targets</span></div>
<div class="a t" style="left:399.6px;top:692.65px;font-size:13px;line-height:13px;color:#5c5c5c;font-weight:400;letter-spacing:0.244px;"><span id="t86">14:49 7/31/2019</span></div>
<div class="a t" style="left:555.6px;top:692.65px;font-size:13px;line-height:13px;color:#5c5c5c;font-weight:400;letter-spacing:1.000px;"><span id="t87">5</span></div>
<div class="a t" style="left:712.8px;top:692.65px;font-size:13px;line-height:13px;color:#5c5c5c;font-weight:400;letter-spacing:0.805px;"><span id="t88">on demand</span></div>
<div class="a t" style="left:860.4px;top:692.65px;font-size:13px;line-height:13px;color:#5c5c5c;font-weight:400;letter-spacing:1.100px;"><span id="t89">38</span></div>
<div class="a t" style="left:991px;top:692.65px;font-size:13px;line-height:13px;color:#5c5c5c;font-weight:400;letter-spacing:1.100px;"><span id="t90">30</span></div>
<div class="a t" style="left:1121.5px;top:692.65px;font-size:13px;line-height:13px;color:#5c5c5c;font-weight:400;letter-spacing:1.100px;"><span id="t91">12</span></div>
<div class="a t" style="left:1256.6px;top:692.65px;font-size:13px;line-height:13px;color:#5c5c5c;font-weight:400;letter-spacing:1.100px;"><span id="t92">0</span></div>
<div class="a t" style="left:1386.5px;top:692.65px;font-size:13px;line-height:13px;color:#5c5c5c;font-weight:400;letter-spacing:1.100px;"><span id="t93">14</span></div>
<div class="a" style="left:25px;top:756px;width:1475px;height:1px;background:#dedede;"></div>
<div class="a" style="left:37px;top:730px;width:16px;height:16px;border:1px solid #9a9a9a;border-radius:3px;background:#fff"></div>
<div class="a t" style="left:76.3px;top:730.65px;font-size:13px;line-height:13px;color:#2b76a6;font-weight:400;letter-spacing:1.071px;"><span id="t94">Demo</span></div>
<div class="a t" style="left:257px;top:730.65px;font-size:13px;line-height:13px;color:#2b76a6;font-weight:400;letter-spacing:1.138px;"><span id="t95">Demo</span></div>
<div class="a t" style="left:399.6px;top:730.65px;font-size:13px;line-height:13px;color:#5c5c5c;font-weight:400;letter-spacing:0.244px;"><span id="t96">14:52 7/31/2019</span></div>
<div class="a t" style="left:555.6px;top:730.65px;font-size:13px;line-height:13px;color:#5c5c5c;font-weight:400;letter-spacing:1.000px;"><span id="t97">7</span></div>
<div class="a t" style="left:712.8px;top:730.65px;font-size:13px;line-height:13px;color:#5c5c5c;font-weight:400;letter-spacing:0.805px;"><span id="t98">on demand</span></div>
<div class="a t" style="left:860.4px;top:730.65px;font-size:13px;line-height:13px;color:#5c5c5c;font-weight:400;letter-spacing:1.100px;"><span id="t99">40</span></div>
<div class="a t" style="left:991px;top:730.65px;font-size:13px;line-height:13px;color:#5c5c5c;font-weight:400;letter-spacing:1.100px;"><span id="t100">34</span></div>
<div class="a t" style="left:1121.5px;top:730.65px;font-size:13px;line-height:13px;color:#5c5c5c;font-weight:400;letter-spacing:1.100px;"><span id="t101">12</span></div>
<div class="a t" style="left:1256.6px;top:730.65px;font-size:13px;line-height:13px;color:#5c5c5c;font-weight:400;letter-spacing:1.100px;"><span id="t102">0</span></div>
<div class="a t" style="left:1386.5px;top:730.65px;font-size:13px;line-height:13px;color:#5c5c5c;font-weight:400;letter-spacing:1.100px;"><span id="t103">14</span></div>
<div class="a" style="left:25px;top:794px;width:1475px;height:1px;background:#dedede;"></div>
<div class="a" style="left:37px;top:768px;width:16px;height:16px;border:1px solid #9a9a9a;border-radius:3px;background:#fff"></div>
<div class="a t" style="left:76.3px;top:768.65px;font-size:13px;line-height:13px;color:#2b76a6;font-weight:400;letter-spacing:0.788px;"><span id="t104">London Datacenter</span></div>
<div class="a t" style="left:257px;top:768.65px;font-size:13px;line-height:13px;color:#2b76a6;font-weight:400;letter-spacing:0.702px;"><span id="t105">London DC</span></div>
<div class="a t" style="left:399.6px;top:768.65px;font-size:13px;line-height:13px;color:#5c5c5c;font-weight:400;letter-spacing:0.244px;"><span id="t106">14:45 7/31/2019</span></div>
<div class="a t" style="left:555.6px;top:768.65px;font-size:13px;line-height:13px;color:#5c5c5c;font-weight:400;letter-spacing:1.000px;"><span id="t107">5</span></div>
<div class="a t" style="left:712.8px;top:768.65px;font-size:13px;line-height:13px;color:#5c5c5c;font-weight:400;letter-spacing:0.805px;"><span id="t108">on demand</span></div>
<div class="a t" style="left:860.4px;top:768.65px;font-size:13px;line-height:13px;color:#5c5c5c;font-weight:400;letter-spacing:1.100px;"><span id="t109">34</span></div>
<div class="a t" style="left:991px;top:768.65px;font-size:13px;line-height:13px;color:#5c5c5c;font-weight:400;letter-spacing:1.100px;"><span id="t110">26</span></div>
<div class="a t" style="left:1121.5px;top:768.65px;font-size:13px;line-height:13px;color:#5c5c5c;font-weight:400;letter-spacing:1.100px;"><span id="t111">4</span></div>
<div class="a t" style="left:1256.6px;top:768.65px;font-size:13px;line-height:13px;color:#5c5c5c;font-weight:400;letter-spacing:1.100px;"><span id="t112">0</span></div>
<div class="a t" style="left:1386.5px;top:768.65px;font-size:13px;line-height:13px;color:#5c5c5c;font-weight:400;letter-spacing:1.100px;"><span id="t113">10</span></div>
<div class="a" style="left:25px;top:832px;width:1475px;height:1px;background:#dedede;"></div>
<div class="a" style="left:37px;top:806px;width:16px;height:16px;border:1px solid #9a9a9a;border-radius:3px;background:#fff"></div>
<div class="a t" style="left:76.3px;top:806.65px;font-size:13px;line-height:13px;color:#2b76a6;font-weight:400;letter-spacing:0.724px;"><span id="t114">New York Office</span></div>
<div class="a t" style="left:257px;top:806.65px;font-size:13px;line-height:13px;color:#2b76a6;font-weight:400;letter-spacing:0.470px;"><span id="t115">NY DC</span></div>
<div class="a t" style="left:399.6px;top:806.65px;font-size:13px;line-height:13px;color:#5c5c5c;font-weight:400;letter-spacing:0.244px;"><span id="t116">14:57 7/31/2019</span></div>
<div class="a t" style="left:555.6px;top:806.65px;font-size:13px;line-height:13px;color:#5c5c5c;font-weight:400;letter-spacing:1.000px;"><span id="t117">5</span></div>
<div class="a t" style="left:712.8px;top:806.65px;font-size:13px;line-height:13px;color:#5c5c5c;font-weight:400;letter-spacing:0.805px;"><span id="t118">on demand</span></div>
<div class="a t" style="left:860.4px;top:806.65px;font-size:13px;line-height:13px;color:#5c5c5c;font-weight:400;letter-spacing:1.100px;"><span id="t119">40</span></div>
<div class="a t" style="left:991px;top:806.65px;font-size:13px;line-height:13px;color:#5c5c5c;font-weight:400;letter-spacing:1.100px;"><span id="t120">34</span></div>
<div class="a t" style="left:1121.5px;top:806.65px;font-size:13px;line-height:13px;color:#5c5c5c;font-weight:400;letter-spacing:1.100px;"><span id="t121">12</span></div>
<div class="a t" style="left:1256.6px;top:806.65px;font-size:13px;line-height:13px;color:#5c5c5c;font-weight:400;letter-spacing:1.100px;"><span id="t122">0</span></div>
<div class="a t" style="left:1386.5px;top:806.65px;font-size:13px;line-height:13px;color:#5c5c5c;font-weight:400;letter-spacing:1.100px;"><span id="t123">14</span></div>
<div class="a" style="left:25px;top:835px;width:1475px;height:2px;background:#d2d2d2;"></div>
<div class="a" style="left:25px;top:837px;width:1475px;height:10px;background:#fafafa;"></div>
</body></html>
